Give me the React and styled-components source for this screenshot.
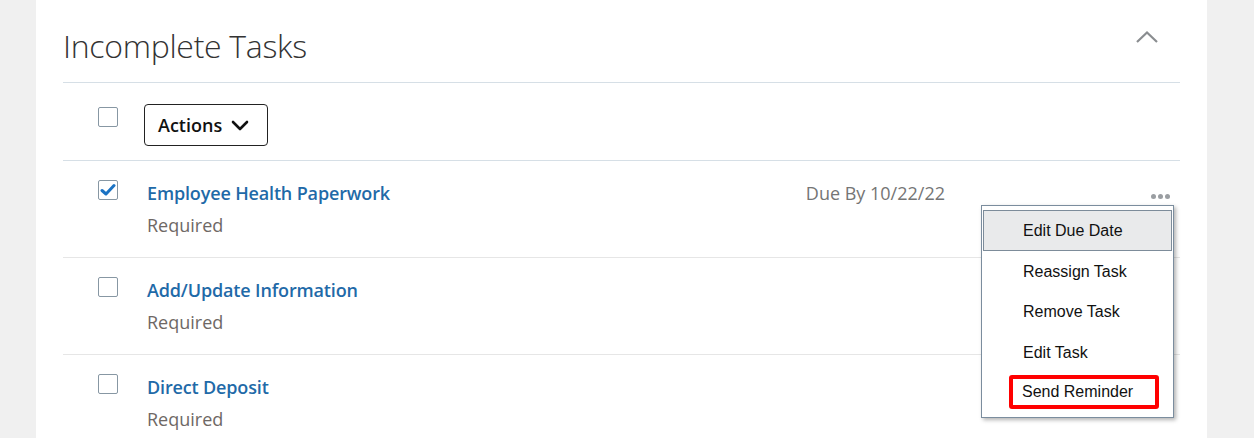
import styled, { createGlobalStyle } from "styled-components"

const GlobalStyle = createGlobalStyle`
    html, body {
        margin: 0;
        padding: 0;
        background: #f0f0f0;
        font-family: "Open Sans", "Liberation Sans", sans-serif;
    }
`

const tasks = [
    { id: 1, title: "Employee Health Paperwork", status: "Required", due: "Due By 10/22/22", checked: true, menu: true },
    { id: 2, title: "Add/Update Information", status: "Required" },
    { id: 3, title: "Direct Deposit", status: "Required" },
]

const menuItems = ["Edit Due Date", "Reassign Task", "Remove Task", "Edit Task", "Send Reminder"]

const ChevronUp = () => (
    <svg width="24" height="14" viewBox="0 0 24 14">
        <path d="M2 12 L12 2.5 L22 12" fill="none" stroke="#8a8d90" strokeWidth="2.2" />
    </svg>
)

const ChevronDown = () => (
    <svg width="18" height="11" viewBox="0 0 18 11">
        <path d="M2 2 L9 9 L16 2" fill="none" stroke="#111" strokeWidth="2.6" strokeLinecap="round" strokeLinejoin="round" />
    </svg>
)

const Check = () => (
    <svg width="16" height="14" viewBox="0 0 16 14">
        <path d="M2 7.5 L6 11 L14 2.5" fill="none" stroke="#1b73c4" strokeWidth="3" strokeLinecap="round" strokeLinejoin="round" />
    </svg>
)

const App = () => {
    return (
        <Page>
            <GlobalStyle />
            <Panel>
                <Header>
                    <Title>Incomplete Tasks</Title>
                    <Collapse><ChevronUp /></Collapse>
                </Header>
                <Toolbar>
                    <Box />
                    <ActionsBTN>Actions <ChevronDown /></ActionsBTN>
                </Toolbar>
                {tasks.map((task) => (
                    <Row key={task.id}>
                        <Box>{task.checked && <Check />}</Box>
                        <Info>
                            <TaskTitle>{task.title}</TaskTitle>
                            <Status>{task.status}</Status>
                        </Info>
                        {task.due && <Due>{task.due}</Due>}
                        {task.menu && <Dots><Dot /><Dot /><Dot /></Dots>}
                        {task.menu && (
                            <Menu>
                                {menuItems.map((item, i) => (
                                    <MenuItem key={item} active={i === 0}>
                                        <MenuLabel outlined={i === menuItems.length - 1}>{item}</MenuLabel>
                                    </MenuItem>
                                ))}
                            </Menu>
                        )}
                    </Row>
                ))}
            </Panel>
        </Page>
    )
}

export default App

const Page = styled.div`
    display: flex;
    padding-left: 36px;
    height: 438px;
    overflow: hidden;
`

const Panel = styled.div`
    width: 1171px;
    background: #fff;
    padding: 0 27px;
    box-sizing: border-box;
`

const Header = styled.div`
    height: 82px;
    display: flex;
    align-items: center;
    justify-content: space-between;
    border-bottom: 1px solid #d6dfe6;
`

const Title = styled.h1`
    margin: 0;
    margin-top: 8px;
    font-weight: 300;
    font-size: 32px;
    color: #333;
    letter-spacing: -0.3px;
`

const Collapse = styled.div`
    display: flex;
    margin-right: 21px;
    margin-top: -8px;
`

const Toolbar = styled.div`
    height: 78px;
    display: flex;
    align-items: flex-start;
    padding: 21px 0 0 35px;
    box-sizing: border-box;
    border-bottom: 1px solid #d6dfe6;
    gap: 26px;
`

const Box = styled.div`
    width: 18px;
    height: 18px;
    border: 1px solid #8797a3;
    border-radius: 2px;
    margin-top: 3px;
    display: flex;
    align-items: center;
    justify-content: center;
    flex-shrink: 0;
`

const ActionsBTN = styled.button`
    height: 42px;
    width: 124px;
    box-sizing: border-box;
    border: 1px solid #222;
    border-radius: 4px;
    background: #fff;
    font-family: "Open Sans", "Liberation Sans", sans-serif;
    font-weight: 600;
    font-size: 18px;
    color: #111;
    display: flex;
    align-items: center;
    gap: 9px;
    padding: 0 0 0 13px;
`

const Row = styled.div`
    position: relative;
    height: 97px;
    box-sizing: border-box;
    display: flex;
    align-items: flex-start;
    padding: 16px 0 0 35px;
    border-bottom: 1px solid #e6e6e6;
`

const Info = styled.div`
    display: flex;
    flex-direction: column;
    gap: 8px;
    margin: 4px 0 0 29px;
    flex: 1;
`

const TaskTitle = styled.div`
    font-size: 18px;
    line-height: 24px;
    font-weight: 600;
    color: #1f6aa8;
    letter-spacing: -0.15px;
`

const Status = styled.div`
    font-size: 18px;
    line-height: 24px;
    color: #6e6865;
`

const Due = styled.div`
    font-size: 18px;
    line-height: 24px;
    color: #757575;
    margin: 4px 235px 0 0;
`

const Dots = styled.div`
    position: absolute;
    right: 10px;
    top: 33px;
    display: flex;
    gap: 2px;
`

const Dot = styled.span`
    width: 5px;
    height: 5px;
    border-radius: 50%;
    background: #9a9ea2;
`

const Menu = styled.div`
    position: absolute;
    top: 44px;
    right: 6px;
    width: 193px;
    box-sizing: border-box;
    border: 1px solid #7b8d9e;
    background: #fff;
    padding: 4px 1px 4px 1px;
    box-shadow: 2px 2px 4px rgba(0, 0, 0, 0.3);
    z-index: 2;
`

const MenuItem = styled.div`
    height: 40.5px;
    box-sizing: border-box;
    display: flex;
    align-items: center;
    padding: 2px 0 0 23px;
    border: 1px solid ${({active}) => (active ? "#7d8c9a" : "transparent")};
    background: ${({active}) => (active ? "#e9eaeb" : "transparent")};
    font-family: "Liberation Sans", Arial, sans-serif;
    font-size: 16px;
    color: #111;
`

const MenuLabel = styled.div`
    width: 150px;
    height: 34px;
    box-sizing: border-box;
    display: flex;
    align-items: center;
    padding: 0 0 0 ${({outlined}) => (outlined ? "9px" : "16px")};
    border: ${({outlined}) => (outlined ? "4px solid #ff0000" : "none")};
    border-radius: 3px;
    margin-left: ${({outlined}) => (outlined ? "2px" : "0")};
    margin-top: ${({outlined}) => (outlined ? "-2px" : "0")};
`
